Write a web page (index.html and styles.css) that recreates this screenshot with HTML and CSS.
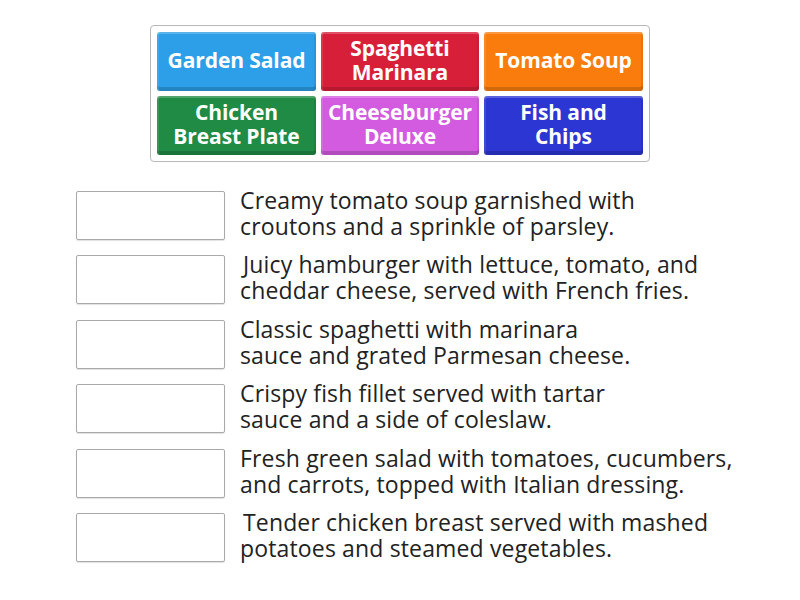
FILE: index.html
```html
<!DOCTYPE html>
<html>
<head>
<meta charset="utf-8">
<link rel="stylesheet" href="styles.css">
</head>
<body>
<div class="page">
  <div class="bank">
    <div class="tile blue">Garden Salad</div>
    <div class="tile red">Spaghetti<br>Marinara</div>
    <div class="tile orange">Tomato Soup</div>
    <div class="tile green">Chicken<br>Breast Plate</div>
    <div class="tile pink">Cheeseburger<br>Deluxe</div>
    <div class="tile navy">Fish and<br>Chips</div>
  </div>
  <div class="rows">
    <div class="row"><div class="slot"></div><div class="desc">Creamy tomato soup garnished with<br>croutons and a sprinkle of parsley.</div></div>
    <div class="row"><div class="slot"></div><div class="desc"><span class="lead">Juicy hamburger with lettuce, tomato, and</span><br>cheddar cheese, served with French fries.</div></div>
    <div class="row"><div class="slot"></div><div class="desc">Classic spaghetti with marinara<br>sauce and grated Parmesan cheese.</div></div>
    <div class="row"><div class="slot"></div><div class="desc">Crispy fish fillet served with tartar<br>sauce and a side of coleslaw.</div></div>
    <div class="row"><div class="slot"></div><div class="desc">Fresh green salad with tomatoes, cucumbers,<br>and carrots, topped with Italian dressing.</div></div>
    <div class="row"><div class="slot"></div><div class="desc"><span class="lead">Tender chicken breast served with mashed</span><br>potatoes and steamed vegetables.</div></div>
  </div>
</div>
</body>
</html>
```

FILE: styles.css
```css
* { box-sizing: border-box; }
html, body { margin: 0; padding: 0; background: #fff; }
body { font-family: "Open Sans", "Liberation Sans", sans-serif; color: #222; }
.page { width: 800px; height: 600px; padding-top: 25px; }
.bank {
  width: 500px;
  margin-left: 150px;
  border: 1px solid #b8b8b8;
  border-radius: 4px;
  padding: 6px;
  display: grid;
  grid-template-columns: 159px 158px 159px;
  grid-auto-rows: 59px;
  column-gap: 5px;
  row-gap: 5px;
}
.tile {
  border-radius: 3px;
  color: #fff;
  font-weight: 700;
  font-size: 21px;
  line-height: 24px;
  padding-bottom: 4px;
  display: flex;
  align-items: center;
  justify-content: center;
  text-align: center;
  letter-spacing: -0.1px;
  white-space: nowrap;
  box-shadow: inset 0 2px 0 rgba(255,255,255,0.22), inset 2px 0 0 rgba(255,255,255,0.10), inset -2px 0 0 rgba(0,0,0,0.06), inset 0 -4px 0 rgba(0,0,0,0.16);
}
.blue { background: #2d9ee8; }
.red { background: #d81f3a; }
.orange { background: #f97c0c; }
.green { background: #1f8b45; }
.pink { background: #d25bdf; }
.navy { background: #2b36d3; }
.rows {
  margin-top: 29px;
  margin-left: 76px;
  display: flex;
  flex-direction: column;
  gap: 15.4px;
}
.row { display: flex; align-items: flex-start; height: 49px; }
.slot {
  width: 149px;
  height: 49px;
  border: 1px solid #a9a9a9;
  border-radius: 2px;
  box-shadow: 0 1px 1px rgba(0,0,0,0.12);
  flex: none;
}
.desc {
  margin-left: 15px;
  margin-top: -4px;
  font-size: 23px;
  line-height: 26px;
  letter-spacing: 0.15px;
  white-space: nowrap;
  color: #222;
}
.lead { padding-left: 3px; }
```
